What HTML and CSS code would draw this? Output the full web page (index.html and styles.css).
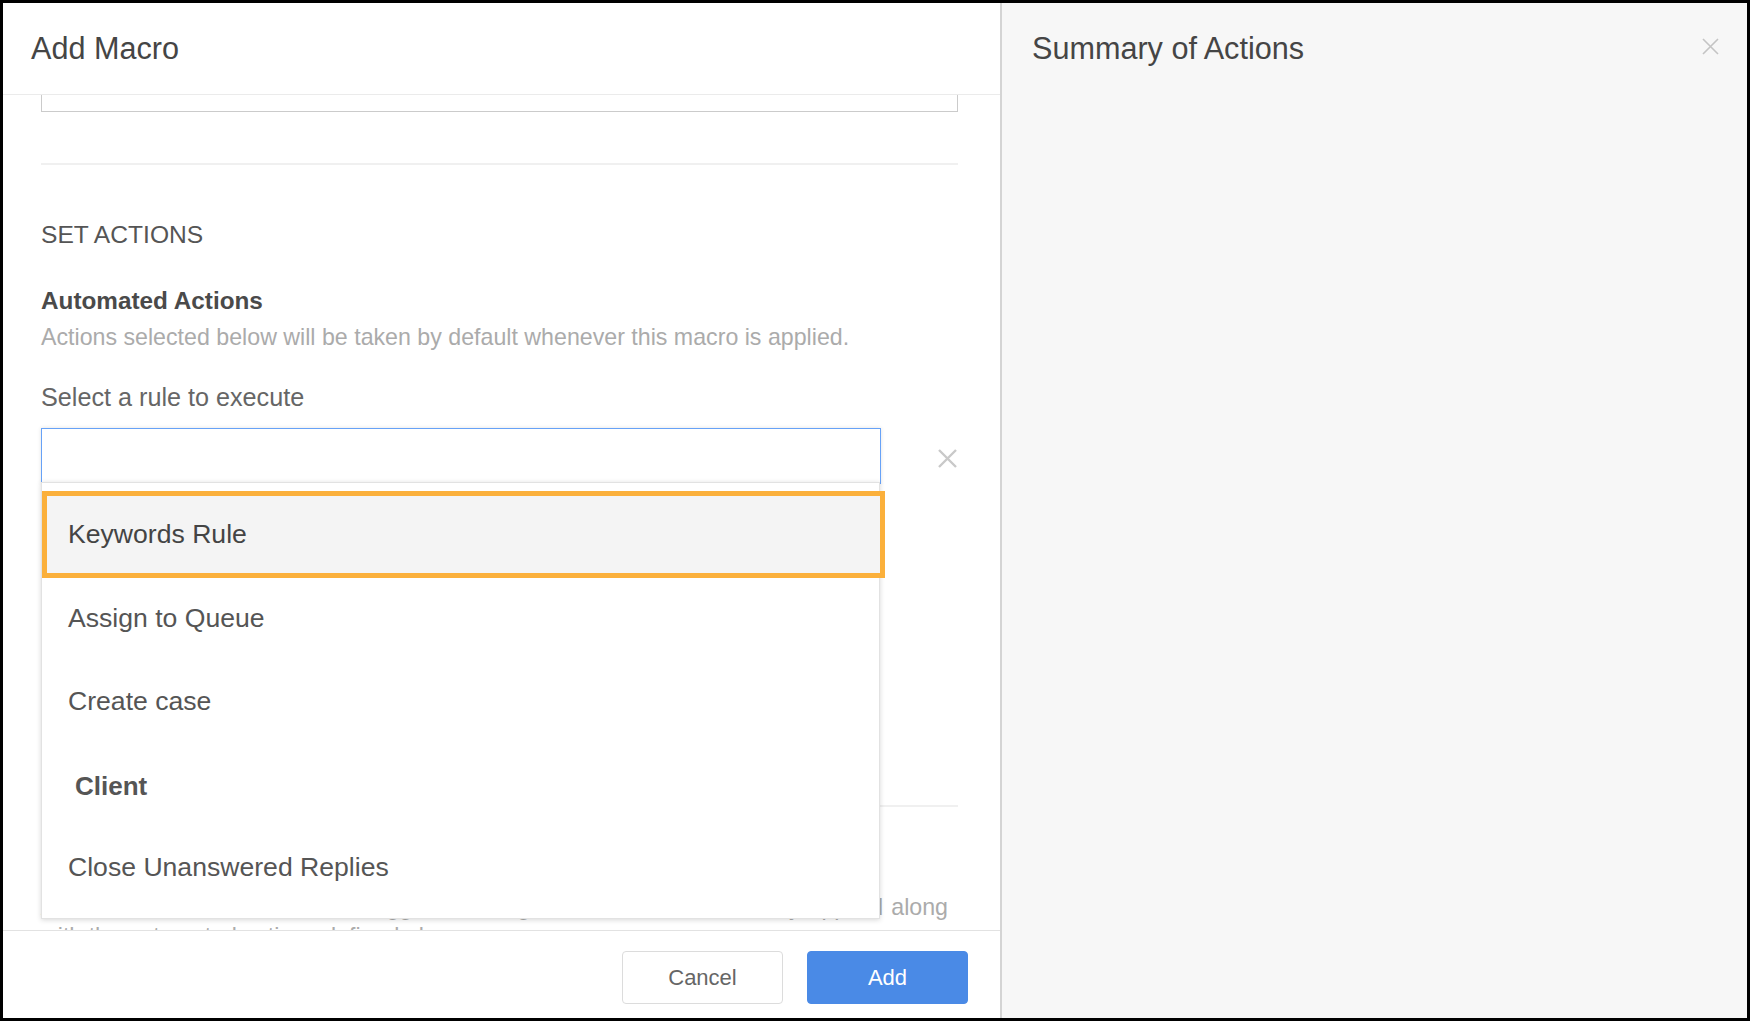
FILE: index.html
```html
<!DOCTYPE html>
<html lang="en">
    <head>
        <meta charset="utf-8" />
        <title>Add Macro</title>
        <link rel="stylesheet" href="styles.css">
    </head>

    <body>
        <div class="frame">
            <div class="editor">
                <div class="editor-head">
                    <h1 class="title">Add Macro</h1>
                </div>

                <div class="editor-body">
                    <div class="field-box scrolled"></div>
                    <div class="divider first"></div>

                    <h2 class="section-title">SET ACTIONS</h2>
                    <h3 class="group-title">Automated Actions</h3>
                    <p class="hint">Actions selected below will be taken by default whenever this macro is applied.</p>

                    <label class="field-label">Select a rule to execute</label>
                    <div class="rule-row">
                        <div class="rule-select"></div>
                        <span class="remove">
                            <svg width="21" height="21" viewBox="0 0 21 21">
                                <path d="M2 2 L19 19 M19 2 L2 19" stroke="#c9c9c9" stroke-width="2.4" fill="none" />
                            </svg>
                        </span>
                        <ul class="menu">
                            <li class="menu-item active">Keywords Rule</li>
                            <li class="menu-item">Assign to Queue</li>
                            <li class="menu-item">Create case</li>
                            <li class="menu-group">Client</li>
                            <li class="menu-item">Close Unanswered Replies</li>
                        </ul>
                    </div>

                    <div class="divider second"></div>
                    <h3 class="group-title suggested">Suggested Actions</h3>
                    <p class="hint two-line"><span class="hint-line">Actions selected below will be suggested to agents and can be manually applied along</span>with the automated actions defined above.</p>
                </div>

                <div class="editor-foot">
                    <button class="btn">Cancel</button>
                    <button class="btn primary">Add</button>
                </div>
            </div>

            <aside class="summary">
                <div class="summary-head">
                    <h2 class="title">Summary of Actions</h2>
                    <svg class="close" width="17" height="17" viewBox="0 0 17 17">
                        <path d="M1 1 L16 16 M16 1 L1 16" stroke="#c4c4c4" stroke-width="1.6" fill="none" />
                    </svg>
                </div>
            </aside>
        </div>
    </body>
</html>
```

FILE: styles.css
```css
html, body {
    margin: 0;
    padding: 0;
    height: 100%;
    overflow: hidden;
}
body {
    font-family: "Liberation Sans", Arial, Helvetica, sans-serif;
    background: #000;
}
h1, h2, h3, p, ul {
    margin: 0;
    padding: 0;
}
.frame {
    display: flex;
    height: 100vh;
    border: 3px solid #000;
    box-sizing: border-box;
}
.editor {
    flex: none;
    width: 997px;
    display: flex;
    flex-direction: column;
    background: #fff;
}
.editor-head {
    height: 91px;
    display: flex;
    align-items: center;
    padding-left: 28px;
    border-bottom: 1px solid #ebebeb;
}
.title {
    font-size: 30.6px;
    font-weight: normal;
    color: #454545;
}
.editor-body {
    flex: 1;
    overflow: hidden;
    padding: 0 42px 0 38px;
}
.field-box {
    height: 57px;
    box-sizing: border-box;
    border: 1px solid #cbcbcb;
}
.field-box.scrolled {
    margin-top: -40px;
}
.divider {
    border-top: 2px solid #f0f0f0;
}
.divider.first {
    margin-top: 51px;
}
.divider.second {
    margin-top: 321px;
}
.section-title {
    margin-top: 55px;
    font-size: 24.6px;
    line-height: 30px;
    font-weight: normal;
    color: #555;
}
.group-title {
    margin-top: 36px;
    font-size: 24.3px;
    line-height: 30px;
    font-weight: bold;
    color: #4a4a4a;
}
.group-title.suggested {
    margin-top: 50px;
}
.hint {
    margin-top: 7px;
    font-size: 23.2px;
    line-height: 28px;
    color: #ababab;
}
.hint.two-line {
    margin-top: 6px;
    line-height: 29px;
}
.hint-line {
    display: block;
    width: 907px;
    text-align: justify;
    text-align-last: justify;
}
.field-label {
    display: block;
    margin-top: 31px;
    font-size: 25.2px;
    line-height: 30px;
    color: #666;
}
.rule-row {
    position: relative;
    display: flex;
    margin-top: 16px;
    height: 56px;
}
.rule-select {
    width: 840px;
    box-sizing: border-box;
    border: 1px solid #67a2f7;
    box-shadow: 0 0 4px rgba(0, 0, 0, 0.12);
}
.remove {
    margin-left: auto;
    margin-top: 20px;
    width: 21px;
    height: 21px;
}
.remove svg {
    display: block;
}
.menu {
    position: absolute;
    top: 54px;
    left: 0;
    width: 839px;
    box-sizing: border-box;
    padding: 11px 0 9px;
    list-style: none;
    background: #fff;
    border: 1px solid #e2e2e2;
    box-shadow: 0 1px 5px rgba(0, 0, 0, 0.16);
    z-index: 2;
}
.menu-item {
    height: 83px;
    line-height: 83px;
    padding-left: 26px;
    font-size: 26.6px;
    color: #555;
}
.menu-item.active {
    height: 87px;
    line-height: 77px;
    box-sizing: border-box;
    margin: -3px -6px -1px 0;
    padding-left: 21px;
    border: 5px solid #fbb03b;
    background: #f4f4f4;
    color: #444;
}
.menu-group {
    height: 83px;
    line-height: 87px;
    padding-left: 33px;
    font-size: 26px;
    font-weight: bold;
    color: #555;
}
.editor-foot {
    height: 88px;
    box-sizing: border-box;
    border-top: 1px solid #e2e2e2;
    display: flex;
    justify-content: flex-end;
    align-items: flex-start;
    gap: 24px;
    padding: 20px 32px 0 0;
    background: #fff;
}
.btn {
    width: 161px;
    height: 53px;
    font-family: inherit;
    font-size: 22px;
    color: #666;
    background: #fff;
    border: 1px solid #dcdcdc;
    border-radius: 4px;
}
.btn.primary {
    color: #fff;
    background: #4a8ae6;
    border-color: #4a8ae6;
}
.summary {
    flex: 1;
    background: #f7f7f7;
    border-left: 2px solid #d4d4d4;
}
.summary-head {
    height: 91px;
    display: flex;
    align-items: center;
    justify-content: space-between;
    padding: 0 28px 0 30px;
}
.close {
    margin-top: -4px;
}
```
